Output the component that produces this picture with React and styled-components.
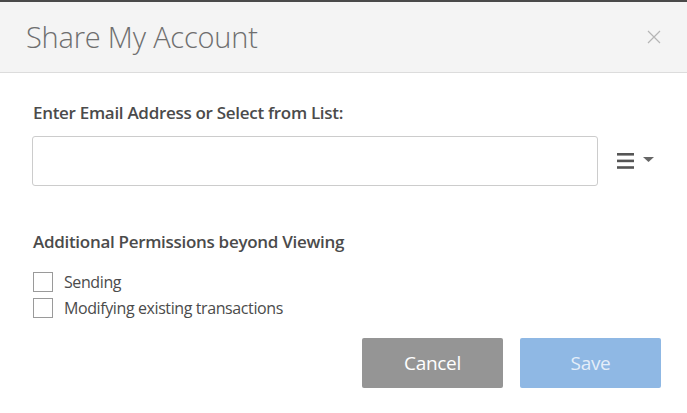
import React from 'react';
import styled, { createGlobalStyle } from 'styled-components';

const GlobalStyle = createGlobalStyle`
  html, body {
    margin: 0;
    padding: 0;
    background: #ffffff;
  }
  body {
    font-family: "Open Sans", "Liberation Sans", sans-serif;
  }
`;

export const Dialog = styled.div`
  width: 687px;
  height: 413px;
  box-sizing: border-box;
  border-top: 2px solid #4a4a4a;
  background: #fff;
  display: flex;
  flex-direction: column;
`;

export const Header = styled.div`
  height: 71px;
  box-sizing: border-box;
  background: #f4f4f4;
  border-bottom: 1px solid #dcdcdc;
  display: flex;
  align-items: center;
  justify-content: space-between;
  padding: 0 26px 0 26px;
`;

export const Title = styled.h1`
  margin: 0;
  font-size: 29px;
  font-weight: 300;
  color: #6e6e6e;
  letter-spacing: -0.2px;
  padding-bottom: 2px;
`;

export const Close = styled.button`
  border: 0;
  background: none;
  padding: 0;
  width: 14px;
  height: 14px;
  display: flex;
  cursor: pointer;
`;

export const Body = styled.div`
  padding: 28px 26px 0 32px;
  display: flex;
  flex-direction: column;
`;

export const Label = styled.div`
  font-size: 17px;
  font-weight: 600;
  color: #4b4b4b;
  letter-spacing: -0.3px;
  margin-left: 1px;
`;

export const InputRow = styled.div`
  display: flex;
  align-items: center;
  margin-top: 12px;
`;

export const EmailInput = styled.input`
  width: 566px;
  height: 50px;
  box-sizing: border-box;
  border: 1px solid #cccccc;
  border-radius: 3px;
  outline: none;
  padding: 0 10px;
  font-size: 15px;
`;

export const ListToggle = styled.button`
  border: 0;
  background: none;
  padding: 0;
  margin-left: 19px;
  display: flex;
  align-items: center;
  gap: 9px;
  cursor: pointer;
`;

export const Section = styled.div`
  margin-top: 44px;
`;

export const CheckList = styled.div`
  display: flex;
  flex-direction: column;
  gap: 5px;
  margin-top: 18px;
`;

export const CheckRow = styled.label`
  display: flex;
  align-items: center;
  gap: 11px;
  height: 21px;
  font-size: 16px;
  color: #4b4b4b;
  letter-spacing: -0.4px;
  cursor: pointer;
`;

export const Box = styled.span`
  width: 20px;
  height: 20px;
  box-sizing: border-box;
  border: 1px solid #9a9a9a;
  background: #fff;
  margin-left: 1px;
`;

export const Footer = styled.div`
  display: flex;
  justify-content: flex-end;
  gap: 17px;
  padding: 20px 26px 0 0;
`;

export const Button = styled.button`
  width: 141px;
  height: 50px;
  border: 0;
  border-radius: 2px;
  font-family: inherit;
  font-size: 19px;
  letter-spacing: -0.3px;
  background: ${p => (p.primary ? '#8fb8e4' : '#959595')};
  color: ${p => (p.primary ? '#e4eef9' : '#ffffff')};
  cursor: ${p => (p.disabled ? 'default' : 'pointer')};
`;

const HamburgerIcon = () => (
  <svg width="38" height="20" viewBox="0 0 38 20">
    <rect x="0" y="2" width="17" height="2.6" fill="#555" />
    <rect x="0" y="8.6" width="17" height="2.6" fill="#555" />
    <rect x="0" y="15.2" width="17" height="2.6" fill="#555" />
    <polygon points="26,6 37,6 31.5,11" fill="#666" />
  </svg>
);

const CloseIcon = () => (
  <svg width="14" height="14" viewBox="0 0 14 14">
    <path d="M1 1 L13 13 M13 1 L1 13" stroke="#b5b5b5" strokeWidth="1.2" />
  </svg>
);

const permissions = ['Sending', 'Modifying existing transactions'];

const App = () => (
  <>
    <GlobalStyle />
    <Dialog>
      <Header>
        <Title>Share My Account</Title>
        <Close aria-label="Close">
          <CloseIcon />
        </Close>
      </Header>
      <Body>
        <Label>Enter Email Address or Select from List:</Label>
        <InputRow>
          <EmailInput type="text" />
          <ListToggle aria-label="Select from list">
            <HamburgerIcon />
          </ListToggle>
        </InputRow>
        <Section>
          <Label>Additional Permissions beyond Viewing</Label>
          <CheckList>
            {permissions.map(p => (
              <CheckRow key={p}>
                <Box />
                {p}
              </CheckRow>
            ))}
          </CheckList>
        </Section>
      </Body>
      <Footer>
        <Button>Cancel</Button>
        <Button primary disabled>
          Save
        </Button>
      </Footer>
    </Dialog>
  </>
);

export default App;
